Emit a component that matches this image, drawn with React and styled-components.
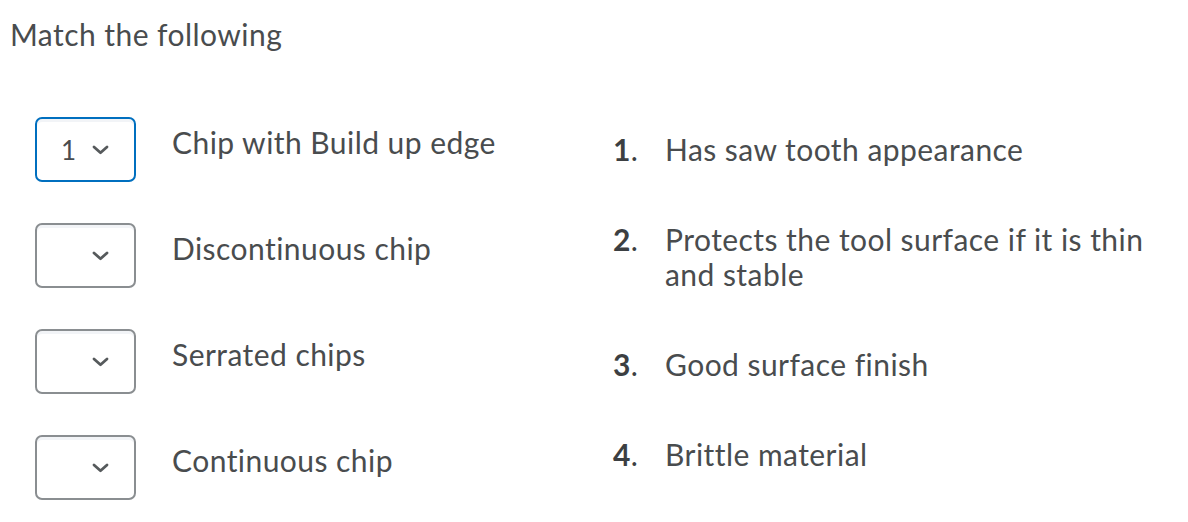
import React from "react";
import styled, { createGlobalStyle } from "styled-components";

const GlobalStyle = createGlobalStyle`
  html, body { margin: 0; padding: 0; background: #ffffff; }
  body {
    font-family: Lato, "Noto Sans", "Liberation Sans", sans-serif;
    color: #494c4e;
    font-variant-ligatures: none;
    -webkit-font-smoothing: antialiased;
  }
`;

const Page = styled.main`
  padding: 12px 10px 0 10px;
`;

const Title = styled.h1`
  margin: 0;
  font-size: 30px;
  font-weight: 400;
  letter-spacing: 0.45px;
  line-height: 44px;
  color: #494c4e;
`;

const Board = styled.div`
  display: grid;
  grid-template-columns: 578px 550px;
  padding: 61px 0 0 25px;
`;

const Pairs = styled.div`
  display: flex;
  flex-direction: column;
  gap: 41px;
`;

const Pair = styled.div`
  display: flex;
  align-items: flex-start;
  gap: 36px;
`;

const Picker = styled.div`
  box-sizing: border-box;
  width: 101px;
  height: 65px;
  flex: none;
  display: flex;
  align-items: center;
  justify-content: space-between;
  padding: 0 25px 0 24px;
  border: 2px solid ${(p) => (p.$focused ? "#006fbf" : "#8a8e91")};
  border-radius: 7px;
  background: #ffffff;
  box-shadow: inset 0 3px 0 0 rgba(185, 194, 208, 0.18);
  font-size: 26px;
  color: #494c4e;
`;

const PickerValue = styled.span`
  min-width: 14px;
  line-height: 1;
`;

const Term = styled.span`
  font-size: 30px;
  letter-spacing: 0.45px;
  line-height: 36px;
  padding-top: 7px;
`;

const Choices = styled.ol`
  list-style: none;
  margin: 0;
  padding: 15px 0 0 0;
  display: flex;
  flex-direction: column;
  gap: 55px;
`;

const Choice = styled.li`
  display: grid;
  grid-template-columns: 52px 1fr;
  font-size: 30px;
  letter-spacing: 0.45px;
  line-height: 35px;
`;

const ChoiceNumber = styled.span`
  font-weight: 700;
  color: #3c3f42;
`;

const Dot = styled.span`
  font-weight: 400;
`;

function Chevron() {
  return (
    <svg width="17" height="10" viewBox="0 0 17 10" aria-hidden="true">
      <path
        d="M2 2 L8.5 7.8 L15 2"
        fill="none"
        stroke="#565a5c"
        strokeWidth="2.8"
        strokeLinecap="round"
        strokeLinejoin="round"
      />
    </svg>
  );
}

const pairs = [
  { term: "Chip with Build up edge", value: "1" },
  { term: "Discontinuous chip", value: "" },
  { term: "Serrated chips", value: "" },
  { term: "Continuous chip", value: "" },
];

const choices = [
  "Has saw tooth appearance",
  "Protects the tool surface if it is thin and stable",
  "Good surface finish",
  "Brittle material",
];

export default function App() {
  return (
    <>
      <GlobalStyle />
      <Page>
        <Title>Match the following</Title>
        <Board>
          <Pairs>
            {pairs.map((p, i) => (
              <Pair key={p.term}>
                <Picker $focused={i === 0}>
                  <PickerValue>{p.value}</PickerValue>
                  <Chevron />
                </Picker>
                <Term>{p.term}</Term>
              </Pair>
            ))}
          </Pairs>
          <Choices>
            {choices.map((c, i) => (
              <Choice key={c}>
                <ChoiceNumber>
                  {i + 1}
                  <Dot>.</Dot>
                </ChoiceNumber>
                <span>{c}</span>
              </Choice>
            ))}
          </Choices>
        </Board>
      </Page>
    </>
  );
}
